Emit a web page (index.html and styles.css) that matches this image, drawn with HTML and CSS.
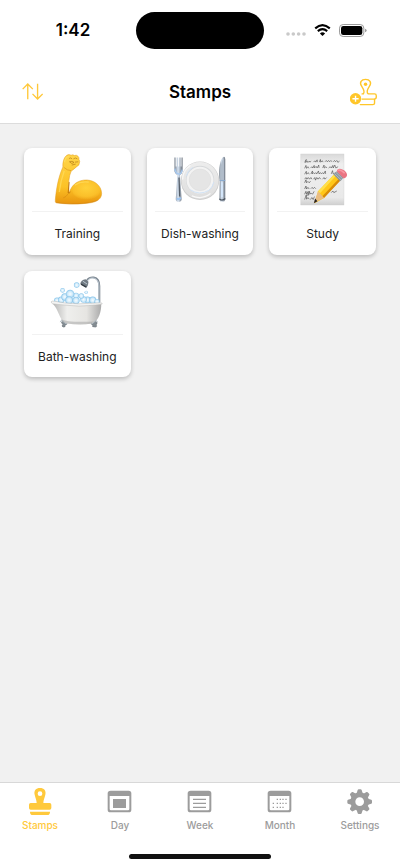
FILE: index.html
```html
<!DOCTYPE html>
<html lang="en">
<head>
<meta charset="utf-8">
<meta name="viewport" content="width=device-width, initial-scale=1">
<title>Stamps</title>
<link rel="stylesheet" href="styles.css">
</head>
<body>
<div class="app">
  <header class="header">
    <div class="status">
      <time class="clock">1:42</time>
      <span class="island"></span>
      <div class="signals">
        <svg class="cell" viewBox="0 0 20 4" aria-hidden="true"><g fill="#c9c9c9"><circle cx="2" cy="2" r="1.8"/><circle cx="7.3" cy="2" r="1.8"/><circle cx="12.6" cy="2" r="1.8"/><circle cx="18" cy="2" r="1.8"/></g></svg>
        <svg class="wifi" viewBox="0 0 51 37" aria-hidden="true"><g fill="none" stroke="#000" stroke-width="6.4"><path d="M3 13.500Q25.500-6.500 48 13.500"/><path d="M11 22Q25.500 10 40 22"/></g><path d="M17.500 29Q25.500 22.500 33.500 29L25.500 37Z"/></svg>
        <svg class="battery" viewBox="0 0 84 39" aria-hidden="true"><rect x="1.500" y="1.500" width="73" height="36" rx="11" fill="none" stroke="#9b9b9b" stroke-width="3"/><rect x="6" y="6" width="64" height="27" rx="7"/><path d="M78 14Q83 16 83 19.500T78 25Z" fill="#9b9b9b"/></svg>
      </div>
    </div>
    <div class="navbar">
      <button class="tool" type="button" aria-label="Reorder stamps">
        <svg class="sort" viewBox="0 0 62 50" aria-hidden="true"><path d="M17 48V3M2 18L17 3L32 18M46 2V47M31 32L46 47L61 32" fill="none" stroke="#ffc83a" stroke-width="4"/></svg>
      </button>
      <h1 class="title">Stamps</h1>
      <button class="tool" type="button" aria-label="Add stamp">
        <svg class="add" viewBox="450 235 81 81" aria-hidden="true"><g fill="none" stroke="#ffc629" stroke-width="4" stroke-linejoin="round" stroke-linecap="round"><path d="M488 281H485M488 281C494 276 490 268 484 259C476 247 483 239 495 239S514 247 506 259C500 268 496 276 503 281H521Q526 281 526 286V290Q526 296 520 296H485"/><path d="M521 297V308Q521 312 516 312H480"/></g><circle cx="495" cy="253" r="5" fill="#ffc629"/><circle cx="466" cy="295" r="16.500" fill="#ffc629"/><path d="M466 286V304M457 295H475" stroke="#fff" stroke-width="4"/></svg>
      </button>
    </div>
  </header>

  <main class="content">
    <ul class="grid">
      <li><button class="card" type="button">
        <svg class="art" viewBox="82 24 210 192" aria-hidden="true">
          <defs><linearGradient id="skin" x1="0" y1="0" x2="0" y2="1"><stop offset="0" stop-color="#ffd54a"/><stop offset=".65" stop-color="#fcc226"/><stop offset="1" stop-color="#e8940e"/></linearGradient><radialGradient id="muscle" cx=".5" cy=".35" r=".65"><stop offset="0" stop-color="#ffd13a"/><stop offset=".7" stop-color="#fbc02a"/><stop offset="1" stop-color="#fbc02a" stop-opacity="0"/></radialGradient></defs>
          <path d="M144 82C143 69 146 53 156 46Q162 42 169 46Q175 43 179 47Q185 44 190 49Q194 53 193 59Q197 64 194 71Q194 77 187 80Q178 88 169 95C162 111 160 133 163 161C170 139 184 125 207 122C236 118 262 137 262 163C262 184 240 191 211 193C181 196 151 195 123 191Q120 189 121 181C124 149 130 113 144 82Z" fill="url(#skin)" stroke="#e09a18" stroke-width="1.500"/>
          <ellipse cx="215" cy="154" rx="42" ry="28" fill="url(#muscle)"/>
          <path d="M163 128L160 161Q164 162 167 158" fill="none" stroke="#b66b09" stroke-width="2.500"/>
          <path d="M160 163C157 169 151 174 145 176M124 190C156 196 225 196 250 183M147 83Q157 93 169 93" fill="none" stroke="#d08010" stroke-width="2.500" opacity=".6"/>
          <path d="M163 56Q168 52 172 57M176 57Q182 52 188 57M164 66Q173 62 178 68L171 71ZM181 67L191 66M171 76L183 73" fill="none" stroke="#a4690e" stroke-width="2" opacity=".85"/>
          <path d="M149 68Q151 50 162 50M148 94Q137 124 133 158M180 137Q200 124 223 128" fill="none" stroke="#ffe169" stroke-width="4" opacity=".6"/>
        </svg><span class="label">Training</span></button></li>
      <li><button class="card" type="button">
        <svg class="art" viewBox="75 24 210 192" aria-hidden="true">
          <defs><linearGradient id="metal"><stop offset="0" stop-color="#7e8792"/><stop offset=".45" stop-color="#d7e4f3"/><stop offset="1" stop-color="#69717c"/></linearGradient><linearGradient id="plate" x1="0" y1="0" x2="0" y2="1"><stop offset="0" stop-color="#ededed"/><stop offset="1" stop-color="#dedede"/></linearGradient></defs>
          <path d="M102 53H106V80H109V53H113.500V80H116.500V53H121V80H123.500V53H127V91Q127 102 119 107L124 180Q123 188 115 188T106 180L111 107Q102 102 102 91Z" fill="url(#metal)"/>
          <path d="M103 87Q105 101 114 103T126 90" fill="none" stroke="#a6c9f1" stroke-width="4"/><path d="M116 114L118 172" stroke="#555e69" stroke-width="4"/><path d="M109 178Q115 182 122 176" fill="none" stroke="#9bc4f3" stroke-width="5"/>
          <path d="M240 125C236 97 239 66 249 53Q256 47 257 58V181Q256 188 248 188T239 181Z" fill="url(#metal)"/><path d="M244 76Q247 61 253 56V123H243Q241 94 244 76Z" fill="#b1bdca"/><path d="M247 128V174" stroke="#d7eaff" stroke-width="5"/><path d="M240 123H257" stroke="#89abd0" stroke-width="3"/><path d="M239 179Q247 187 257 178" fill="none" stroke="#4a535e" stroke-width="4"/>
          <circle cx="180" cy="124" r="58.500" fill="#cecece"/><circle cx="180" cy="123" r="56.500" fill="url(#plate)"/><circle cx="180" cy="121" r="43" fill="#d6d8da"/><circle cx="180" cy="122" r="41" fill="#f3f3f3"/><circle cx="180" cy="121" r="33" fill="#e5e5e5" stroke="#dadada" stroke-width="1.500"/><path d="M138 110Q143 91 158 83M207 153Q219 143 222 128M150 151Q178 170 207 153" fill="none" stroke="#d1e3f6" stroke-width="3"/><path d="M127 120Q127 93 151 77M155 170Q187 183 212 163" fill="none" stroke="#f8f8f8" stroke-width="4"/>
        </svg><span class="label">Dish-washing</span></button></li>
      <li><button class="card" type="button">
        <svg class="art" viewBox="77 24 210 192" aria-hidden="true">
          <defs><linearGradient id="paper" x1="0" y1="0" x2="0" y2="1"><stop offset="0" stop-color="#d9d9d9"/><stop offset=".2" stop-color="#eee"/><stop offset=".85" stop-color="#e9e9e9"/><stop offset="1" stop-color="#cfcfcf"/></linearGradient></defs>
          <path d="M114 42H246V198H114Z" fill="url(#paper)" stroke="#cbcbcb"/>
          <path d="M126 68l5-9-2 9 5-4 2 4 4-4 2 3 4-3M153 67l4-4 3 4 4-7 1 7M171 67l3-8 1 8 5-4 2 4M188 66l4-4 3 4 4-4 3 4 4-4 3 4M213 66l4-4 3 4 4-4 4 6 4-5" fill="none" stroke="#343434" stroke-width="1.600"/>
          <path d="M126 86l4-9 2 9 4-5 3 5M144 85l4-4 3 4 4-8 1 8 5-5 3 5 5-9 1 9M181 85l4-9 1 9 5-4 3 4M199 85l5-4 3 4 5-8 1 8 5-9 3 9 7-4M126 104l5-9 1 9 5-5 3 5M145 103l5-9-1 9 4-4 3 4 4-4 3 4 5-9 2 9 4-4 3 4 4-4 3 4 5-9 1 9M207 103l4-10 2 10 8-4" fill="none" stroke="#343434" stroke-width="1.600"/>
          <path d="M126 119l4-5 3 5 4-5 4 5 4-5 3 5M153 119l4-5 2 8 4-8 4 5 4-5 4 5M181 119l4-5 3 5 5-5M126 130l4-9 2 9 4-4 4 4 4-5M126 149l4-9 2 9 4-5 4 5M145 148l4-4 3 4 4-4 4 4M126 165l4-9 2 9 5-9-1 13 5-13 1 9 4-4 4 4 5-9M126 181l5-14 1 13 4-5 4 5M144 181l4-6 4 6 4-9M207 160l5-5 3 5 9-5" fill="none" stroke="#343434" stroke-width="1.700"/>
          <path d="M156 192L167 156L217 103L235 121L185 176L156 192Z" fill="#ffc719"/>
          <path d="M167 156L217 103L222 108L173 162Z" fill="#ffe04b"/><path d="M180 171L231 117L236 122L185 176Z" fill="#d98c08"/>
          <path d="M167 156L185 176L155 191Z" fill="#e9bd83"/><path d="M158 178L165 186L154 192Z" fill="#29231f"/>
          <path d="M214 105L224 95L245 115L234 125Z" fill="#8b969e"/><path d="M217 102L238 122M221 98L242 118" stroke="#c0cad2" stroke-width="2"/>
          <path d="M224 95Q225 86 234 87Q250 90 255 103Q257 113 245 117Z" fill="#ea7583"/><path d="M228 92Q235 88 248 101" fill="none" stroke="#f899a4" stroke-width="5"/>
        </svg><span class="label">Study</span></button></li>
      <li><button class="card" type="button">
        <svg class="art" viewBox="82 26 210 192" aria-hidden="true">
          <defs><linearGradient id="tub"><stop offset="0" stop-color="#b5b5b4"/><stop offset=".3" stop-color="#efefed"/><stop offset=".7" stop-color="#e6e5e2"/><stop offset="1" stop-color="#aaa"/></linearGradient><radialGradient id="bubble"><stop offset="0" stop-color="#f7fcff"/><stop offset=".6" stop-color="#cfeafa"/><stop offset="1" stop-color="#86c3e9"/></radialGradient></defs>
          <path d="M255 122V72C255 39 223 40 216 58" fill="none" stroke="#7c8791" stroke-width="6"/><path d="M254 121V72C254 43 226 41 218 57" fill="none" stroke="#ccd6df" stroke-width="2.500"/>
          <path d="M197 65Q199 53 213 51L222 59Q222 70 216 77Z" fill="#717a82"/><path d="M199 66L215 75" stroke="#343c43" stroke-width="4"/><path d="M205 57L218 66" stroke="#bbc6ce" stroke-width="3"/>
          <g fill="url(#bubble)"><circle cx="186" cy="69" r="8.500"/><circle cx="143" cy="85" r="7"/><circle cx="215" cy="91" r="5"/><circle cx="126" cy="116" r="9"/><circle cx="139" cy="114" r="10"/><circle cx="219" cy="114" r="10"/><circle cx="235" cy="115" r="11"/><circle cx="248" cy="119" r="8"/><circle cx="207" cy="113" r="10"/><circle cx="150" cy="105" r="11"/><circle cx="184" cy="101" r="9"/><circle cx="200" cy="102" r="8"/><circle cx="166" cy="96" r="13"/><circle cx="163" cy="115" r="12"/><circle cx="184" cy="116" r="11"/></g>
          <g fill="#828b91" stroke="#5f666b" stroke-width="1"><path d="M143 177L158 181Q158 191 151 191Q153 198 145 197Q138 195 144 188Q135 185 143 177Z"/><path d="M242 177L230 181Q229 191 235 191Q231 197 240 197Q250 198 246 190Q253 184 242 177Z"/></g>
          <path d="M112 124Q190 132 261 125C261 151 254 175 236 185Q197 192 154 186C137 179 133 156 123 139Q119 132 112 124Z" fill="url(#tub)"/><path d="M138 172Q154 183 238 180L229 187Q196 192 156 186Q142 181 138 172Z" fill="#999" opacity=".45"/>
          <path d="M109 119Q111 117 118 118Q148 125 193 126L257 123Q264 122 264 126Q259 130 193 133Q143 130 113 126Q107 123 109 119Z" fill="#f4f4f3" stroke="#b5b5b3" stroke-width="1.500"/>
          <path d="M135 181Q139 173 145 180Q150 187 155 187M250 181Q245 173 240 180Q236 187 231 187" fill="none" stroke="#aeb9c0" stroke-width="3"/>
        </svg><span class="label">Bath-washing</span></button></li>
    </ul>
  </main>

  <footer class="footer">
    <nav class="tabs" aria-label="Main">
      <a class="tab active" href="#stamps" aria-current="page"><svg class="icon" viewBox="75 33 90 90" aria-hidden="true"><path fill-rule="evenodd" d="M120 39C132 39 139 47 136 59C134 68 130 75 130 84H149Q154 84 154 89V99Q154 104 149 104H92Q87 104 87 99V89Q87 84 92 84H110C110 75 106 68 104 59C101 47 108 39 120 39ZM120 49a7 7 0 1 0 0 14 7 7 0 1 0 0-14Z"/><path d="M90 110H150Q150 120 142 120H98Q90 120 90 110Z"/></svg><span>Stamps</span></a>
      <a class="tab" href="#day"><svg class="icon" viewBox="315 33 90 90" aria-hidden="true"><path fill-rule="evenodd" d="M332 47H386Q394 47 394 55V104Q394 112 386 112H331Q323 112 323 104V55Q323 47 332 47ZM329 63V102Q329 106 333 106H384Q388 106 388 102V63Z"/><path d="M339 72H378V99H339Z"/></svg><span>Day</span></a>
      <a class="tab" href="#week"><svg class="icon" viewBox="315 33 90 90" aria-hidden="true"><path fill-rule="evenodd" d="M332 47H386Q394 47 394 55V104Q394 112 386 112H331Q323 112 323 104V55Q323 47 332 47ZM329 63V102Q329 106 333 106H384Q388 106 388 102V63Z"/><path d="M339 71H378V75H339ZM339 83H378V87H339ZM339 95H378V99H339Z"/></svg><span>Week</span></a>
      <a class="tab" href="#month"><svg class="icon" viewBox="195 33 90 90" aria-hidden="true"><path fill-rule="evenodd" d="M212 47H266Q274 47 274 55V104Q274 112 266 112H211Q203 112 203 104V55Q203 47 212 47ZM209 63V102Q209 106 213 106H264Q268 106 268 102V63Z"/><path d="M230 71h4v4h-4zm9 0h4v4h-4zm8 0h4v4h-4zm9 0h4v4h-4zM218 83h4v4h-4zm12 0h4v4h-4zm9 0h4v4h-4zm8 0h4v4h-4zm9 0h4v4h-4zM218 95h4v4h-4zm12 0h4v4h-4zm9 0h4v4h-4zm8 0h4v4h-4z"/></svg><span>Month</span></a>
      <a class="tab" href="#settings"><svg class="icon" viewBox="435 33 90 90" aria-hidden="true"><path fill-rule="evenodd" d="M479 52a28 28 0 1 0 0 56 28 28 0 1 0 0-56ZM479 67a13 13 0 1 1 0 26 13 13 0 1 1 0-26Z"/><g><path id="tooth" d="M470 55L473 45Q474 43 476 43H482Q484 43 485 45L488 55ZM470 105L473 115Q474 117 476 117H482Q484 117 485 115L488 105Z"/><use href="#tooth" transform="rotate(45 479 80)"/><use href="#tooth" transform="rotate(90 479 80)"/><use href="#tooth" transform="rotate(135 479 80)"/></g></svg><span>Settings</span></a>
    </nav>
    <span class="home"></span>
  </footer>
</div>
</body>
</html>
```
FILE: styles.css
```css
* { box-sizing: border-box; }

body {
  margin: 0;
  background: #f1f1f1;
  color: #000;
  font-family: Inter, "Liberation Sans", sans-serif;
}

button {
  margin: 0;
  padding: 0;
  border: 0;
  background: none;
  color: inherit;
  font: inherit;
}

svg { display: block; flex: none; }

.app {
  display: flex;
  flex-direction: column;
  min-height: 100vh;
}

.header {
  background: #fff;
  border-bottom: 1px solid #dcdcdc;
}

.status {
  display: grid;
  grid-template-columns: 1fr 128px 1fr;
  align-items: center;
  height: 60px;
}

.clock {
  padding-left: 10px;
  text-align: center;
  font-size: 17px;
  font-weight: 600;
}

.island {
  height: 37px;
  border-radius: 19px;
  background: #000;
}

.signals {
  display: flex;
  align-items: center;
  justify-content: flex-end;
  gap: 8px;
  padding-right: 33px;
}

.cell { width: 20px; height: 4px; margin-top: 8px; }
.wifi { width: 17px; height: 12px; }
.battery { width: 28px; height: 13px; }

.navbar {
  display: flex;
  align-items: center;
  justify-content: space-between;
  height: 63px;
  padding: 0 22px;
}

.tool {
  display: flex;
  align-items: center;
  width: 28px;
  height: 44px;
}

.sort { width: 21px; height: 17px; }
.add { width: 28px; height: 28px; }

.title {
  margin: 0;
  font-size: 17px;
  font-weight: 600;
}

.content {
  flex: 1;
  padding: 24px;
}

.grid {
  display: grid;
  grid-template-columns: repeat(3, 1fr);
  gap: 16px;
  margin: 0;
  padding: 0;
  list-style: none;
}

.card {
  display: flex;
  flex-direction: column;
  align-items: center;
  width: 100%;
  aspect-ratio: 1;
  padding: 0 8px;
  border-radius: 8px;
  background: #fff;
  box-shadow: 0 2px 4px rgba(0, 0, 0, 0.22);
}

.art { width: 70px; height: 63px; }

.label {
  display: flex;
  flex: 1;
  align-items: center;
  justify-content: center;
  width: 100%;
  border-top: 1px solid #f2f2f2;
  color: #222;
  font-size: 12px;
}

.footer {
  display: flex;
  flex-direction: column;
  align-items: center;
  gap: 21px;
  padding-bottom: 8px;
  border-top: 1px solid #d8d8d8;
  background: #fff;
}

.tabs {
  display: grid;
  grid-template-columns: repeat(5, 1fr);
  width: 100%;
  padding-top: 3px;
}

.tab {
  display: flex;
  flex-direction: column;
  align-items: center;
  gap: 1px;
  color: #9c9c9c;
  font-size: 10px;
  font-weight: 500;
  line-height: 16px;
  text-decoration: none;
}

.tab.active { color: #ffc93c; }

.icon { width: 30px; height: 30px; fill: currentColor; }

.home {
  width: 142px;
  height: 5px;
  border-radius: 3px;
  background: #111;
}
```
